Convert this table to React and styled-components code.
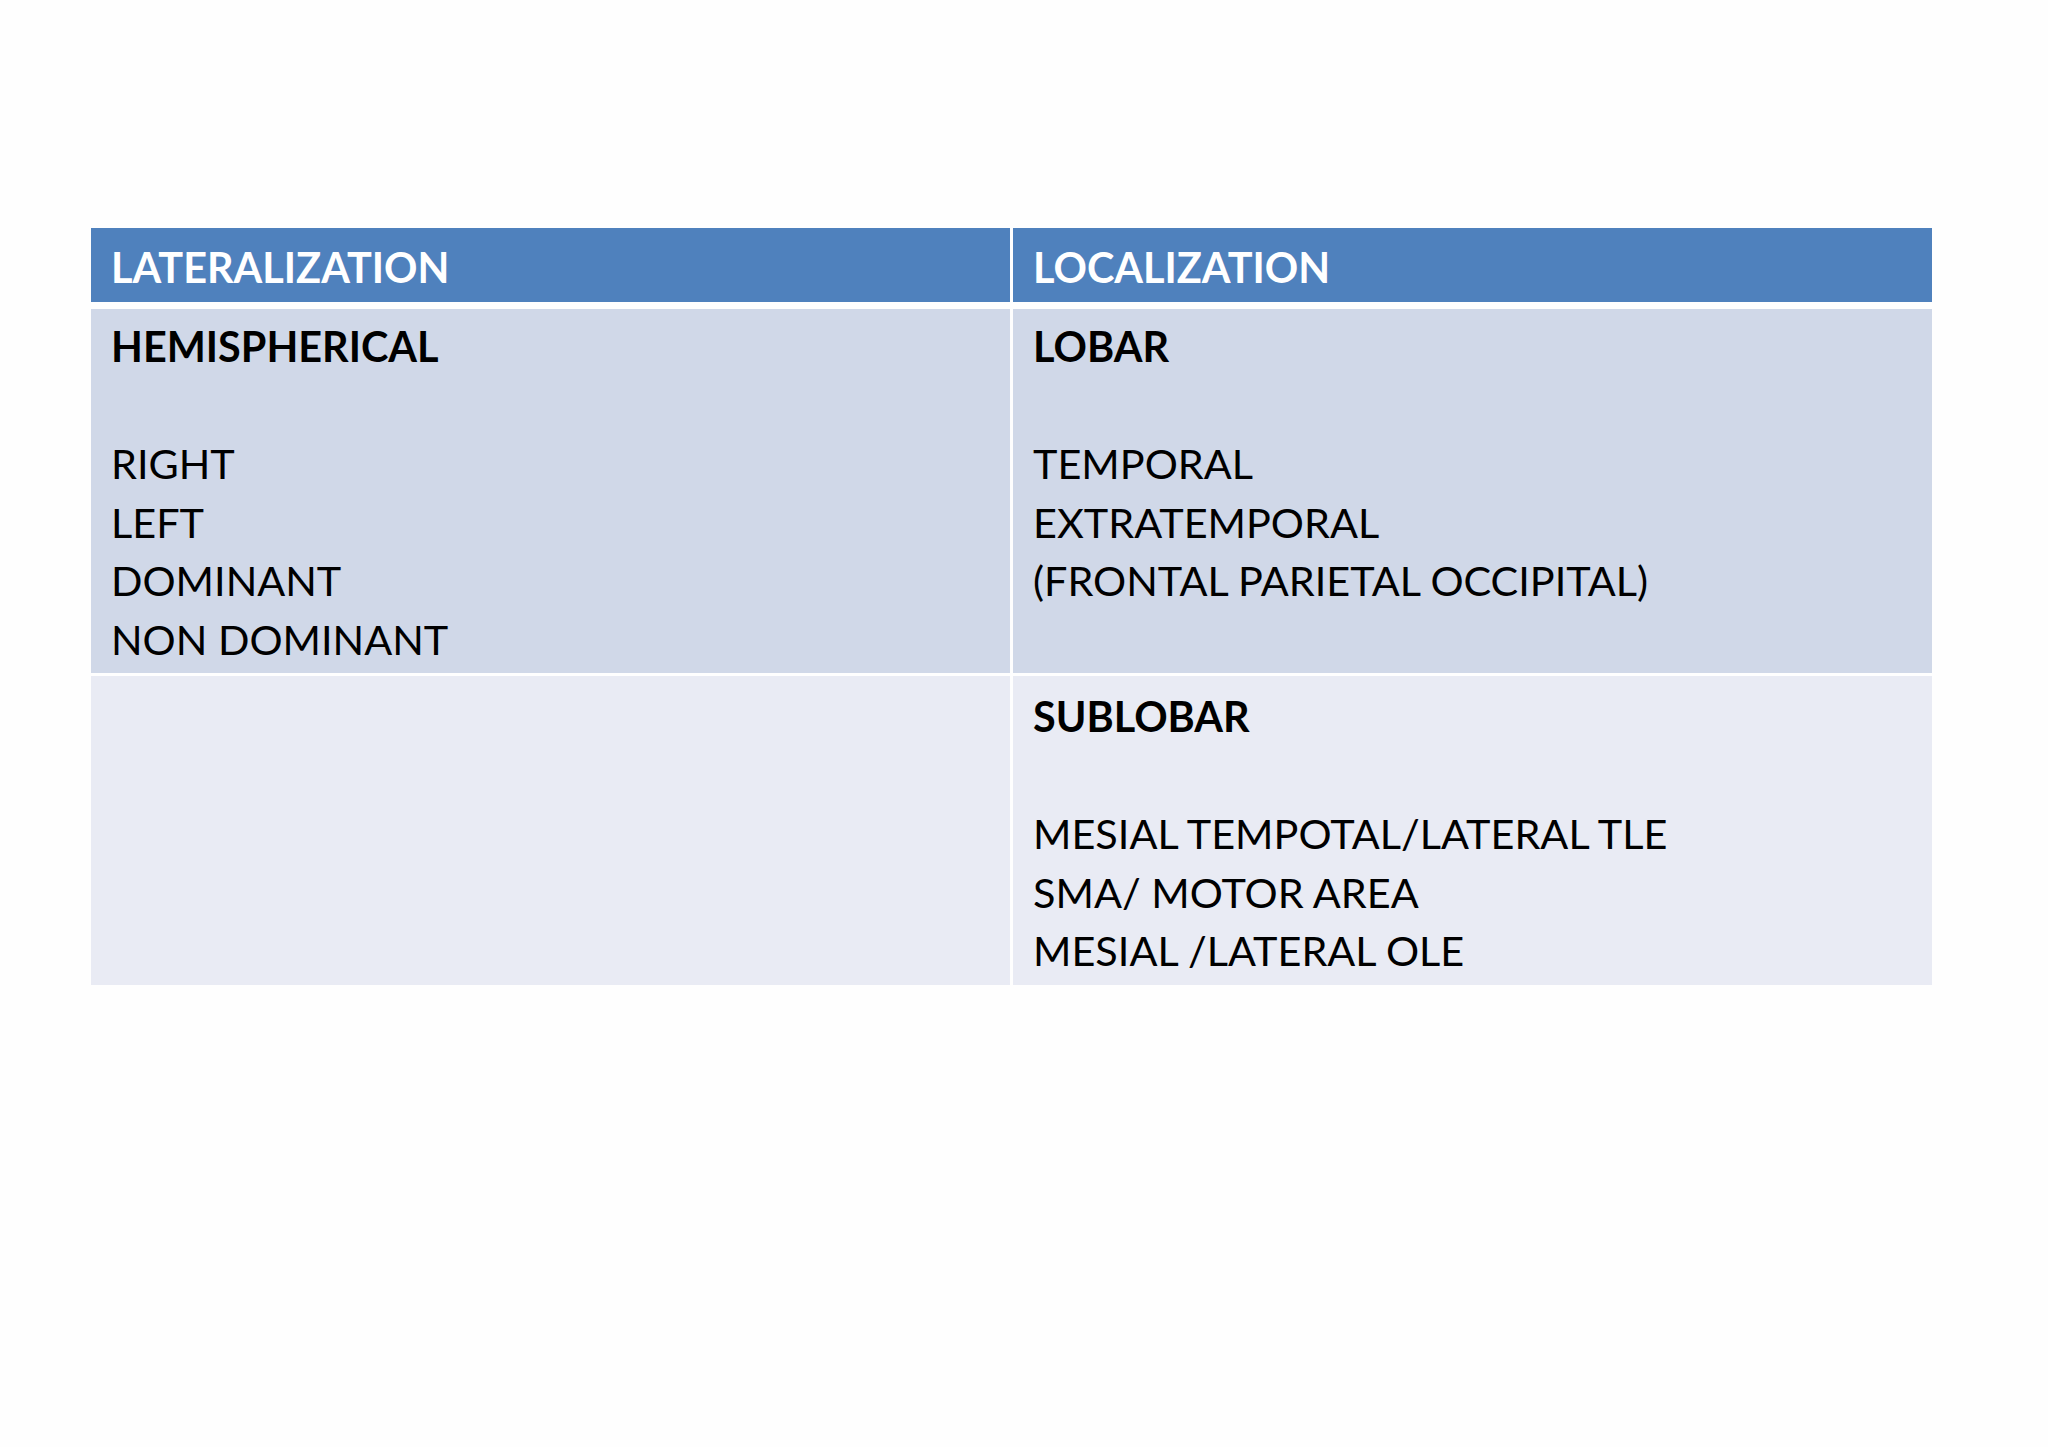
import React from 'react';
import styled, { createGlobalStyle } from 'styled-components';

const GlobalStyle = createGlobalStyle`
  html, body {
    margin: 0;
    padding: 0;
    background: #fefefe;
  }
  body {
    font-family: Lato, "Open Sans", sans-serif;
  }
`;

const Page = styled.div`
  width: 2048px;
  height: 1447px;
  padding: 228px 0 0 91px;
  box-sizing: border-box;
`;

const Table = styled.div`
  width: 1841px;
  display: flex;
  flex-direction: column;
`;

const Row = styled.div`
  display: grid;
  grid-template-columns: 919px 919px;
  column-gap: 3px;
  height: ${props => props.height}px;
  margin-top: ${props => props.gapAbove || 0}px;
`;

const Cell = styled.div`
  background: ${props => props.bg};
  color: ${props => (props.header ? '#ffffff' : '#000000')};
  padding: ${props => props.padTop}px 20px 0 20px;
  font-size: 41.4px;
  line-height: 58.5px;
  box-sizing: border-box;
`;

const Label = styled.div`
  font-weight: 700;
`;

const Line = styled.div`
  font-weight: 400;
  min-height: 58.5px;
  white-space: nowrap;
`;

const HEADER = '#4f81bd';
const ODD = '#d0d8e8';
const EVEN = '#e9ebf4';

const Section = ({ title, items }) => (
  <>
    <Label>{title}</Label>
    <Line />
    {items.map(item => (
      <Line key={item}>{item}</Line>
    ))}
  </>
);

const App = () => (
  <>
    <GlobalStyle />
    <Page>
      <Table>
        <Row height={74}>
          <Cell bg={HEADER} header padTop={10}>
            <Label>LATERALIZATION</Label>
          </Cell>
          <Cell bg={HEADER} header padTop={10}>
            <Label>LOCALIZATION</Label>
          </Cell>
        </Row>
        <Row height={364} gapAbove={7}>
          <Cell bg={ODD} padTop={8}>
            <Section
              title="HEMISPHERICAL"
              items={['RIGHT', 'LEFT', 'DOMINANT', 'NON DOMINANT']}
            />
          </Cell>
          <Cell bg={ODD} padTop={8}>
            <Section
              title="LOBAR"
              items={['TEMPORAL', 'EXTRATEMPORAL', '(FRONTAL PARIETAL OCCIPITAL)']}
            />
          </Cell>
        </Row>
        <Row height={309} gapAbove={3}>
          <Cell bg={EVEN} padTop={11} />
          <Cell bg={EVEN} padTop={11}>
            <Section
              title="SUBLOBAR"
              items={['MESIAL TEMPOTAL/LATERAL TLE', 'SMA/ MOTOR AREA', 'MESIAL /LATERAL OLE']}
            />
          </Cell>
        </Row>
      </Table>
    </Page>
  </>
);

export default App;
